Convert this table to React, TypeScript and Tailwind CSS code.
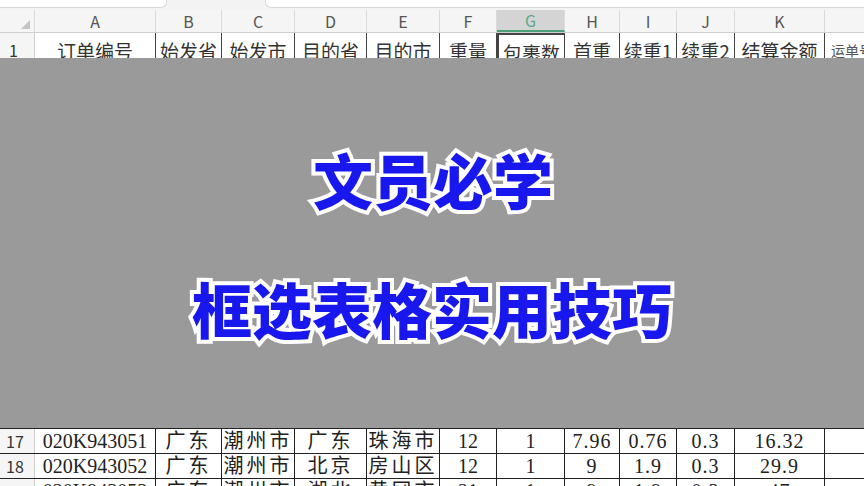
import React from 'react';

const COLS = [
  { key: 'A', w: 121 },
  { key: 'B', w: 66 },
  { key: 'C', w: 73 },
  { key: 'D', w: 72 },
  { key: 'E', w: 73 },
  { key: 'F', w: 57 },
  { key: 'G', w: 68 },
  { key: 'H', w: 55 },
  { key: 'I', w: 57 },
  { key: 'J', w: 58 },
  { key: 'K', w: 90 },
  { key: '', w: 60 },
];

const HEAD = ['订单编号', '始发省', '始发市', '目的省', '目的市', '重量', '包裹数', '首重', '续重1', '续重2', '结算金额', '运单号'];

const ROWS = [
  { n: 17, cells: ['020K943051', '广东', '潮州市', '广东', '珠海市', '12', '1', '7.96', '0.76', '0.3', '16.32', '是'] },
  { n: 18, cells: ['020K943052', '广东', '潮州市', '北京', '房山区', '12', '1', '9', '1.9', '0.3', '29.9', '是'] },
  { n: 19, cells: ['020K943053', '广东', '潮州市', '湖北', '黄冈市', '21', '1', '9', '1.9', '0.3', '47', '是'] },
];

const sans = "font-['Microsoft_YaHei','Noto_Sans_CJK_SC',sans-serif]";
const serif = "font-['Liberation_Serif','Noto_Sans_CJK_SC',serif]";

export default function App() {
  return (
    <div className="w-[864px] h-[486px] overflow-hidden bg-white flex flex-col">
      {/* formula bar remains */}
      <div className="h-[10px] flex bg-[#f3f3f3] shrink-0">
        <div className="w-[167px] h-[8px] bg-white border-b border-r border-[#d8d8d8] rounded-br-md" />
        <div className="w-[98px]" />
        <div className="flex-1 h-[8px] bg-white border-b border-l border-[#d8d8d8] rounded-bl-md" />
      </div>

      {/* column letters */}
      <div className={`h-[23px] flex shrink-0 bg-[#f5f5f5] border-b border-[#cfcfcf] ${sans}`}>
        <div className="w-[35px] shrink-0 relative border-r border-[#dadada]">
          <div className="absolute right-[4px] bottom-[3px] w-0 h-0 border-l-[9px] border-l-transparent border-b-[9px] border-b-[#c4c4c4]" />
        </div>
        {COLS.map((c) => (
          <div
            key={c.key || 'L'}
            style={{ width: c.w }}
            className={`shrink-0 flex items-center justify-center text-[16px] border-r border-[#dadada] ${
              c.key === 'G' ? 'bg-[#d4d4d4] text-[#5aa887] border-b-2 border-b-[#4aa078]' : 'text-[#555]'
            }`}
          >
            {c.key}
          </div>
        ))}
      </div>

      {/* row 1 */}
      <div className={`h-[25px] flex shrink-0 ${sans}`}>
        <div className="w-[35px] shrink-0 bg-[#f5f5f5] border-r border-[#cfcfcf] text-[16px] text-[#333] pl-[9px] pt-[5px]">1</div>
        {COLS.map((c, i) => (
          <div
            key={i}
            style={{ width: c.w }}
            className={`shrink-0 overflow-hidden whitespace-nowrap border-r border-[#444] text-[#333] ${
              i === 11 ? 'text-[14px] pl-[6px] pt-[7px] text-[#555]' : 'text-[19px] text-center pt-[5px] leading-[26px]'
            } ${c.key === 'G' ? 'border-2 border-b-0 border-[#4aa078]' : ''}`}
          >
            {HEAD[i]}
          </div>
        ))}
      </div>

      {/* title card */}
      <div className="h-[370px] shrink-0 bg-[#9a9a9a] flex flex-col items-center justify-center gap-[69px] font-['Noto_Sans_CJK_SC',sans-serif] font-black text-[60px] leading-[60px] text-[#1818ee] [-webkit-text-stroke:8px_white] [paint-order:stroke_fill]">
        <div className="pl-[2px]">文员必学</div>
        <div>框选表格实用技巧</div>
      </div>

      {/* data rows */}
      {ROWS.map((r) => (
        <div key={r.n} className="h-[25px] flex shrink-0 border-t border-[#222]">
          <div className={`w-[35px] shrink-0 bg-[#f5f5f5] border-r border-[#cfcfcf] text-[16px] text-[#333] pl-[6px] leading-[24px] ${sans}`}>
            {r.n}
          </div>
          {COLS.map((c, i) => (
            <div
              key={i}
              style={{ width: c.w }}
              className={`shrink-0 overflow-hidden whitespace-nowrap border-r border-[#222] text-[20px] leading-[24px] text-[#222] ${serif} ${
                i === 11 ? 'text-right' : 'text-center'
              } ${i >= 1 && i <= 4 ? 'tracking-[3px]' : ''} ${i >= 7 && i <= 10 ? 'tracking-[1px]' : ''}`}
            >
              {r.cells[i]}
            </div>
          ))}
        </div>
      ))}
    </div>
  );
}
